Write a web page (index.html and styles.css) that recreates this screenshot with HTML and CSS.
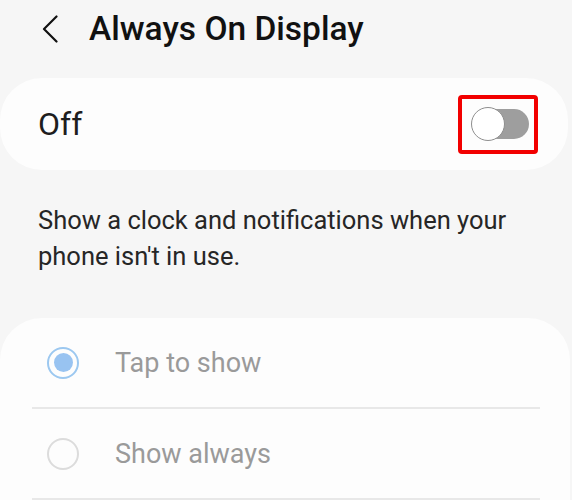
FILE: index.html
```html
<!DOCTYPE html>
<html>
<head>
<meta charset="utf-8">
<link rel="stylesheet" href="styles.css">
</head>
<body>
<div class="screen">
  <header class="header">
    <svg class="back" width="16" height="28" viewBox="0 0 16 28"><path d="M14.5 1.5 L2 14 L14.5 26.5" fill="none" stroke="#111" stroke-width="2.2" stroke-linecap="round" stroke-linejoin="round"/></svg>
    <h1 class="title">Always On Display</h1>
  </header>
  <section class="card master">
    <span class="master-label">Off</span>
    <div class="highlight">
      <div class="toggle">
        <span class="track"></span>
        <span class="thumb"></span>
      </div>
    </div>
  </section>
  <p class="desc">Show a clock and notifications when your phone isn't in use.</p>
  <section class="card options">
    <div class="row">
      <span class="radio checked"><span class="dot"></span></span>
      <span class="row-label">Tap to show</span>
    </div>
    <div class="divider"></div>
    <div class="row">
      <span class="radio"></span>
      <span class="row-label">Show always</span>
    </div>
    <div class="divider"></div>
  </section>
</div>
</body>
</html>
```
FILE: styles.css
```css
html, body {
  margin: 0;
  padding: 0;
  background: #f6f6f6;
}
.screen {
  width: 572px;
  height: 500px;
  overflow: hidden;
  font-family: Roboto, "Noto Sans", sans-serif;
  background: #f6f6f6;
}
.header {
  height: 56px;
  display: flex;
  align-items: center;
  padding-left: 42px;
}
.back {
  display: block;
  flex: none;
  margin-top: 2px;
}
.title {
  margin: 0 0 0 31px;
  font-size: 33.5px;
  font-weight: 500;
  color: #111;
}
.card {
  background: #fdfdfd;
}
.master {
  margin-top: 22px;
  width: 568px;
  height: 92px;
  box-sizing: border-box;
  border-radius: 42px;
  display: flex;
  align-items: center;
  justify-content: space-between;
  padding: 0 30px 0 38px;
}
.master-label {
  font-size: 32px;
  color: #1e1e1e;
}
.highlight {
  width: 80px;
  height: 59px;
  box-sizing: border-box;
  border: 4px solid #f20000;
  border-radius: 4px;
  display: flex;
  align-items: center;
  padding-left: 9px;
}
.toggle {
  position: relative;
  width: 59px;
  height: 34px;
}
.track {
  position: absolute;
  left: 7px;
  top: 2px;
  width: 51px;
  height: 30px;
  border-radius: 15px;
  background: #9e9e9e;
}
.thumb {
  position: absolute;
  left: 0;
  top: 0;
  width: 34px;
  height: 34px;
  box-sizing: border-box;
  border-radius: 50%;
  border: 1.5px solid #8e8e8e;
  background: #fff;
}
.desc {
  margin: 0;
  padding: 32px 40px 44px 38px;
  font-size: 25.5px;
  line-height: 36px;
  color: #262626;
}
.options {
  width: 570px;
  height: 200px;
  border-radius: 42px 42px 0 0;
}
.row {
  height: 89px;
  display: flex;
  align-items: center;
  padding-left: 47px;
}
.radio {
  width: 32px;
  height: 32px;
  box-sizing: border-box;
  border-radius: 50%;
  border: 2px solid #dcdcdc;
  display: flex;
  align-items: center;
  justify-content: center;
  flex: none;
}
.radio.checked {
  border-color: #9cc8f0;
}
.dot {
  width: 19px;
  height: 19px;
  border-radius: 50%;
  background: #98c3f1;
}
.row-label {
  margin-left: 36px;
  font-size: 27px;
  color: #9a9a9a;
}
.divider {
  height: 2px;
  margin: 0 30px 0 32px;
  background: #e8e8e8;
}
```
